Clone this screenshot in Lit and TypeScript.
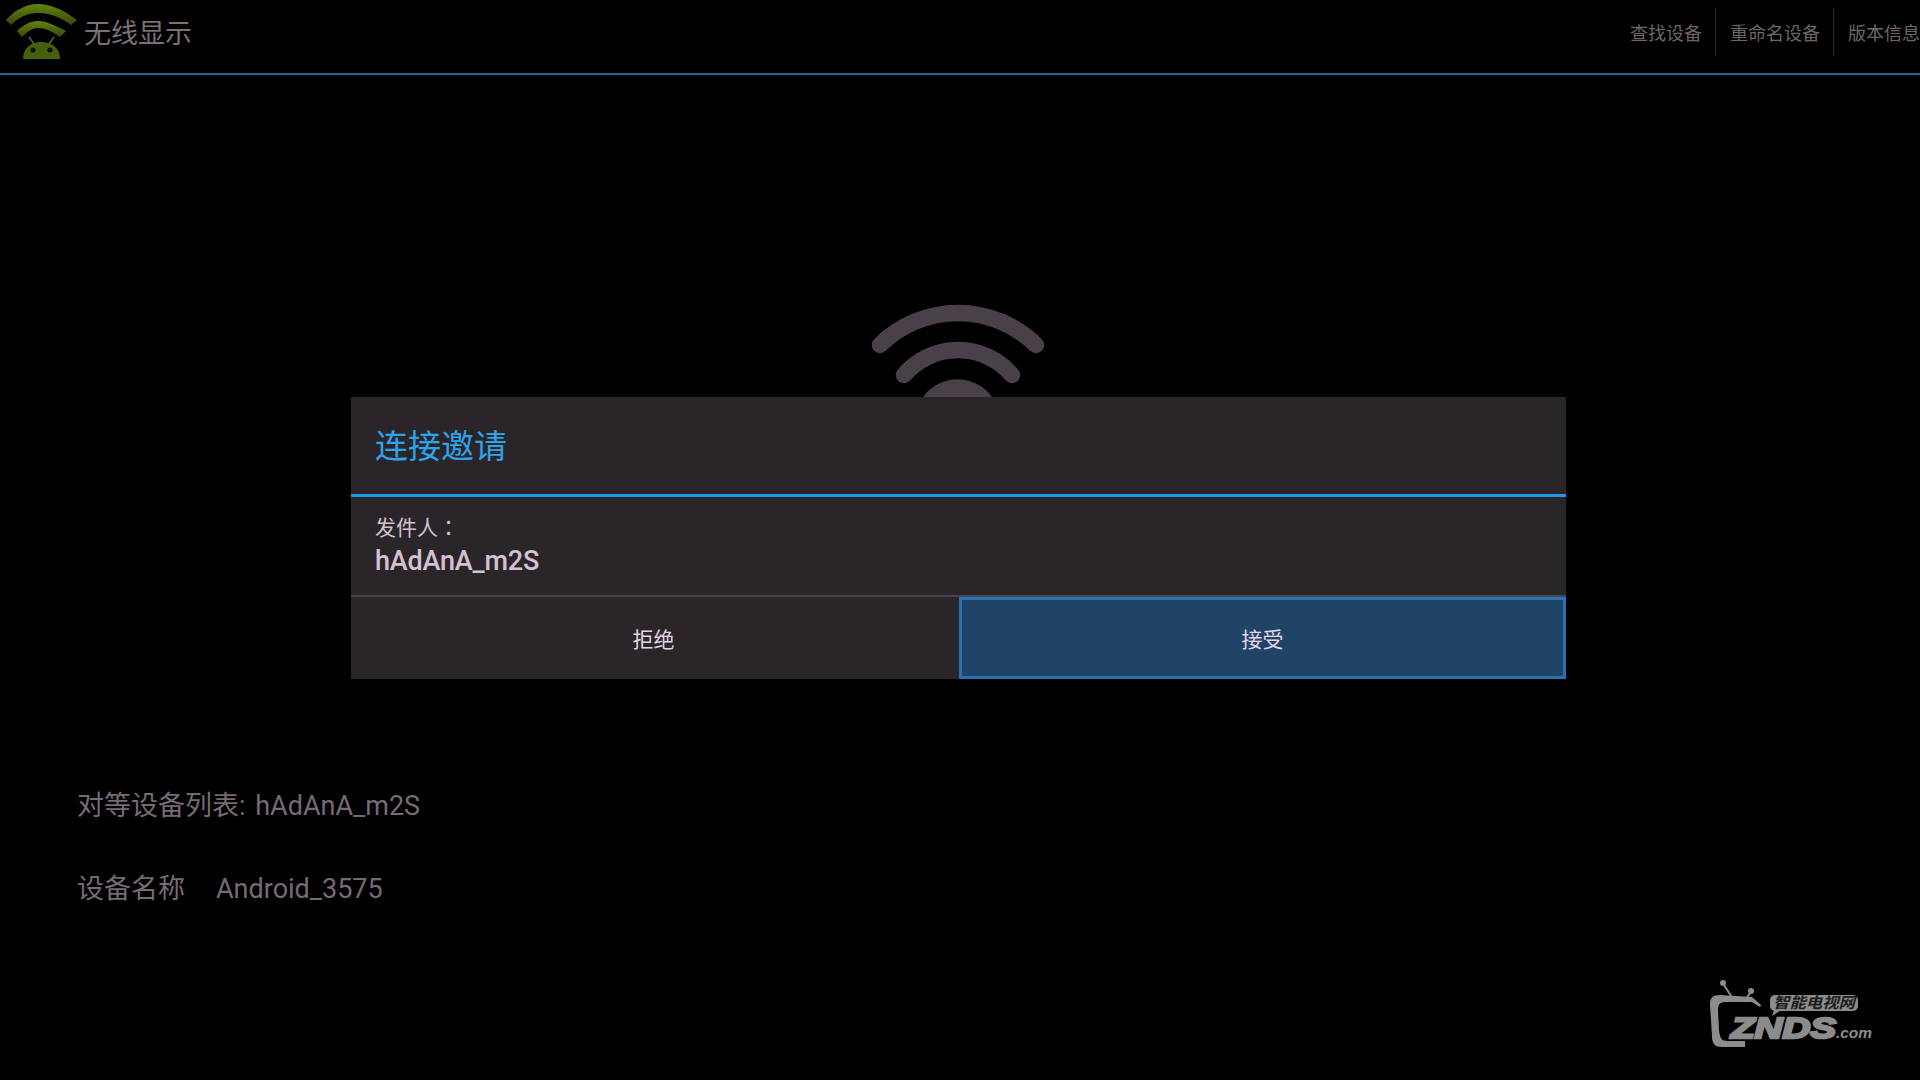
import { LitElement, css, html } from 'lit';
import { customElement, property } from 'lit/decorators.js';

@customElement('app-logo')
export class AppLogo extends LitElement {
  static styles = css`
    :host { display: block; align-self: flex-start; width: 78px; height: 62px; }
    svg { display: block; }
  `;

  render() {
    return html`
      <svg width="78" height="62" viewBox="0 0 78 62">
        <defs>
          <linearGradient id="g" x1="0" y1="0" x2="0" y2="1">
            <stop offset="0" stop-color="#65830f"></stop>
            <stop offset="1" stop-color="#36480a"></stop>
          </linearGradient>
        </defs>
        <path d="M6 20 C16 9 27 4 38 4 C50 4 62 9 77 20 L71 25 C60 17 50 13 38 13 C28 13 19 17 11 25 Z" fill="url(#g)"></path>
        <path d="M17 31 C23 25 31 21 38 21 C46 21 54 25 66 31 L60 37 C53 32 46 28 38 28 C32 28 27 32 22 37 Z" fill="url(#g)"></path>
        <path d="M29 37 L34 44 M54 37 L49 44" stroke="#5c5a4a" stroke-width="1.5"></path>
        <path d="M23 59 C23 48 31 42 41 42 C52 42 60 48 60 59 Z" fill="#47600e"></path>
        <circle cx="33" cy="50" r="2.6" fill="#10140a"></circle>
        <circle cx="50" cy="50" r="2.6" fill="#10140a"></circle>
      </svg>
    `;
  }
}

@customElement('znds-mark')
export class ZndsMark extends LitElement {
  static styles = css`
    :host { display: block; position: absolute; left: 1706px; top: 978px; width: 168px; height: 72px; }
    svg { display: block; }
    text { font-family: "Liberation Sans", "Noto Sans CJK SC", sans-serif; font-weight: 700; font-style: italic; fill: #8c8c8c; }
    .cn { fill: #1c1c1c; }
    .big { stroke: #8c8c8c; stroke-width: 2.4px; }
  `;

  render() {
    return html`
      <svg width="168" height="72" viewBox="0 0 168 72">
        <circle cx="17" cy="5" r="3" fill="#8c8c8c"></circle>
        <circle cx="45" cy="13" r="3" fill="#8c8c8c"></circle>
        <path d="M18 7 L27 21 M44 15 L38 24" stroke="#8c8c8c" stroke-width="2" fill="none"></path>
        <path d="M14 17 C6 17 4 20 4 27 L6 58 C6 66 9 69 16 69 L39 69 L39 63 L22 63 C15 63 14 60 13 52 L12 32 C12 26 14 24 20 24 L46 24 L54 29 L55 27 L46 19 Z" fill="#8c8c8c"></path>
        <rect x="64" y="17" width="88" height="16" rx="5" fill="#8c8c8c"></rect>
        <path d="M68 32 L66 38 L75 32 Z" fill="#8c8c8c"></path>
        <text class="cn" x="67" y="30" font-size="15" textLength="82" lengthAdjust="spacingAndGlyphs">智能电视网</text>
        <text class="big" x="25" y="60" font-size="30" textLength="105" lengthAdjust="spacingAndGlyphs">ZNDS</text>
        <text x="130" y="60" font-size="15" textLength="36" lengthAdjust="spacingAndGlyphs">.com</text>
      </svg>
    `;
  }
}

@customElement('dialog-button')
export class DialogButton extends LitElement {
  static styles = css`
    :host { display: flex; align-items: center; justify-content: center; box-sizing: border-box; padding-right: 3px; font-size: 21px; color: #e4d6e4; }
    :host([focused]) { padding-right: 0; background: #1f4465; border: 3px solid #2a71b3; }
  `;

  @property({ type: Boolean, reflect: true })
  focused = false;

  render() {
    return html`<slot></slot>`;
  }
}

@customElement('app-root')
export class AppRoot extends LitElement {
  static styles = css`
    :host {
      display: block;
      position: relative;
      width: 1920px;
      height: 1080px;
      overflow: hidden;
      background: #000;
      font-family: Roboto, "Noto Sans CJK SC", sans-serif;
    }
    .header {
      display: flex;
      align-items: center;
      box-sizing: border-box;
      height: 75px;
      padding-bottom: 9px;
      border-bottom: 2px solid #2b5f8c;
    }
    .title {
      margin: 0 0 2px 6px;
      font-size: 27px;
      color: #7c7079;
    }
    .menu {
      display: flex;
      align-items: center;
      margin-left: auto;
      font-size: 18px;
      color: #6f646c;
    }
    .menu span {
      display: flex;
      align-items: center;
      height: 48px;
      padding: 0 13px 0 14px;
      border-right: 1px solid #2a2628;
    }
    .menu span:last-child {
      padding-right: 0;
      border-right: none;
    }
    .main {
      display: flex;
      flex-direction: column;
    }
    .signal {
      display: block;
      margin: 222px 0 0 860px;
    }
    .dialog {
      display: flex;
      flex-direction: column;
      width: 1215px;
      height: 282px;
      margin-left: 351px;
      background: #2a2529;
    }
    .dialog-title {
      display: flex;
      align-items: center;
      box-sizing: border-box;
      height: 100px;
      padding: 0 24px 3px;
      border-bottom: 3px solid #2298e6;
      font-size: 33px;
      color: #2fa3e8;
    }
    .dialog-body {
      box-sizing: border-box;
      height: 100px;
      padding: 14px 24px 0;
      border-bottom: 2px solid #4c444b;
      color: #d4c2d2;
    }
    .sender {
      font-size: 21px;
      line-height: 30px;
    }
    .colon {
      font-family: "Noto Sans CJK TC", sans-serif;
    }
    .name {
      font-size: 27px;
      font-weight: 500;
      line-height: 36px;
      letter-spacing: -0.2px;
    }
    .actions {
      display: grid;
      grid-template-columns: 608px 607px;
      flex: 1;
    }
    .info {
      display: flex;
      flex-direction: column;
      gap: 43px;
      margin: 107px 0 0 77px;
      font-size: 27px;
      line-height: 40px;
      color: #766a75;
    }
    .peers {
      word-spacing: 3px;
    }
    .device-label {
      margin-right: 31px;
    }
  `;

  render() {
    return html`
      <div class="header">
        <app-logo></app-logo>
        <div class="title">无线显示</div>
        <div class="menu">
          <span>查找设备</span>
          <span>重命名设备</span>
          <span>版本信息</span>
        </div>
      </div>
      <div class="main">
        <svg class="signal" width="200" height="100" viewBox="0 0 200 100">
          <g fill="none" stroke="#4a404a" stroke-width="16.5" stroke-linecap="round">
            <path d="M20 48 A111 111 0 0 1 176 48"></path>
            <path d="M44 78 A71 71 0 0 1 152 78"></path>
          </g>
          <path d="M63 100 A42.5 42.5 0 0 1 132 100 Z" fill="#4a404a"></path>
        </svg>
        <div class="dialog">
          <div class="dialog-title">连接邀请</div>
          <div class="dialog-body">
            <div class="sender">发件人<span class="colon">：</span></div>
            <div class="name">hAdAnA_m2S</div>
          </div>
          <div class="actions">
            <dialog-button>拒绝</dialog-button>
            <dialog-button focused>接受</dialog-button>
          </div>
        </div>
        <div class="info">
          <div class="peers">对等设备列表: hAdAnA_m2S</div>
          <div><span class="device-label">设备名称</span>Android_3575</div>
        </div>
      </div>
      <znds-mark></znds-mark>
    `;
  }
}
